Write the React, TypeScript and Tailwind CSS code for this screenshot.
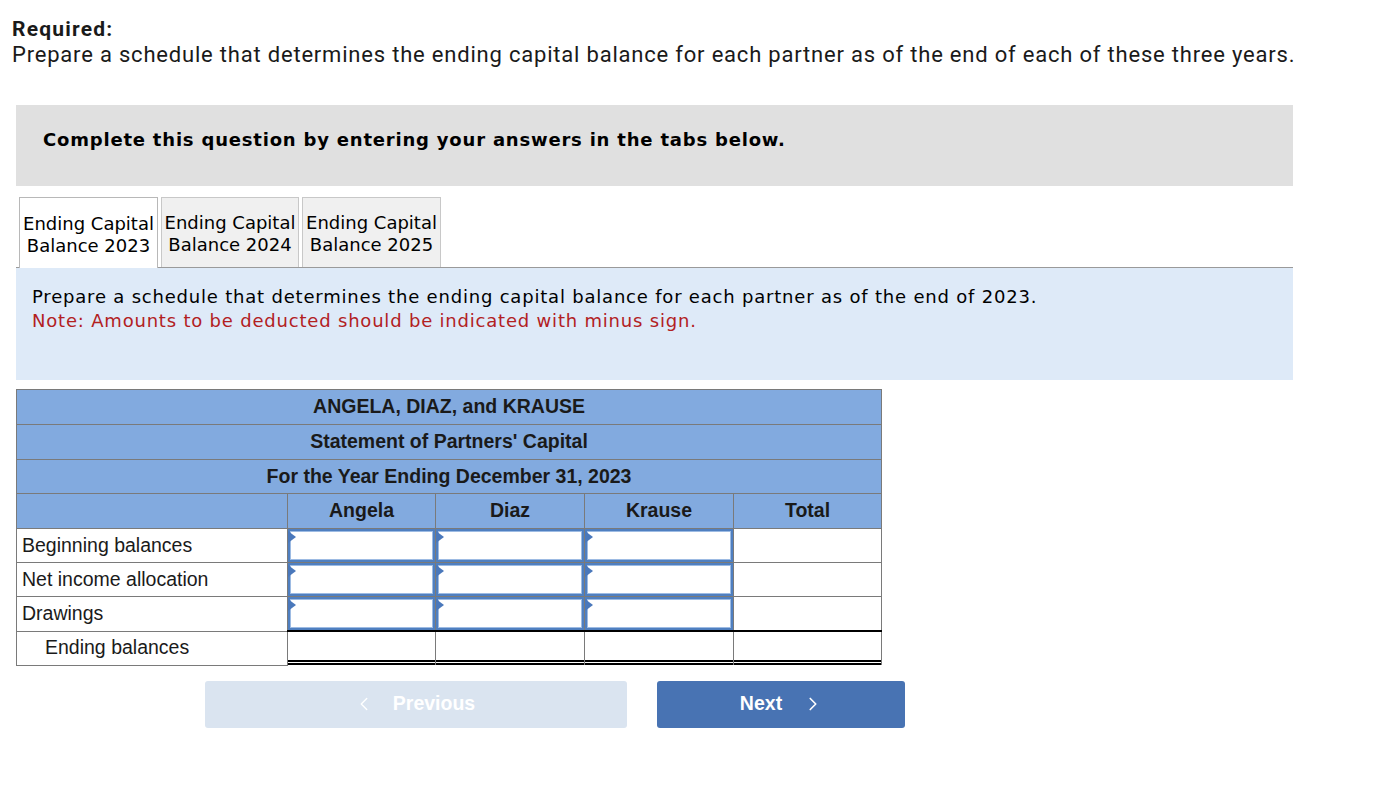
import { ChevronLeft, ChevronRight } from "lucide-react";

const ROWS = ["Beginning balances", "Net income allocation", "Drawings"];
const PARTNERS = ["Angela", "Diaz", "Krause"];
const TITLES = [
  { t: "ANGELA, DIAZ, and KRAUSE", h: "h-[35px]" },
  { t: "Statement of Partners' Capital", h: "h-[35px]" },
  { t: "For the Year Ending December 31, 2023", h: "h-[34px]" },
];

const InputCell = () => (
  <td className="border border-[#7a7a7a] p-0">
    <div className="relative h-[33px] border-2 border-[#4f7fc0] bg-white">
      <div className="absolute inset-0 border border-[#9dbbe3]" />
      <div className="absolute left-[-2px] top-[0px] w-0 h-0 border-y-[6px] border-y-transparent border-l-[8px] border-l-[#4a78bb]" />
    </div>
  </td>
);

export default function App() {
  return (
    <div className="w-[1384px] h-[804px] bg-white text-[#1a1a1a]">
      <div className="pt-[18px] pl-[12px] font-['Roboto',sans-serif]">
        <div className="text-[21px] font-bold tracking-[1.2px] leading-[23px]">Required:</div>
        <div className="text-[22px] tracking-[0.8px] leading-[28px]">
          Prepare a schedule that determines the ending capital balance for each partner as of the end of each of these three years.
        </div>
      </div>

      <div className="ml-[16px] w-[1277px]">
        <div className="mt-[36px] h-[81px] bg-[#e0e0e0] flex items-center pl-[27px] pb-[13px]">
          <span className="font-['DejaVu_Sans',sans-serif] font-bold text-[18px] tracking-[0.8px] text-black">
            Complete this question by entering your answers in the tabs below.
          </span>
        </div>

        <div className="mt-[11px] flex items-end gap-[3px] pl-[3px] border-b border-[#9a9a9a] font-['DejaVu_Sans',sans-serif] text-[18px] leading-[22px] text-black">
          <div className="w-[139px] h-[71px] bg-white border border-[#b8b8b8] border-b-0 -mb-px flex flex-col items-center justify-center pt-[3px]">
            <span>Ending Capital</span>
            <span>Balance 2023</span>
          </div>
          <div className="w-[138px] h-[70px] bg-[#f0f0f0] border border-[#c8c8c8] border-b-0 flex flex-col items-center justify-center pt-[3px]">
            <span>Ending Capital</span>
            <span>Balance 2024</span>
          </div>
          <div className="w-[139px] h-[70px] bg-[#f0f0f0] border border-[#c8c8c8] border-b-0 flex flex-col items-center justify-center pt-[3px]">
            <span>Ending Capital</span>
            <span>Balance 2025</span>
          </div>
        </div>

        <div className="h-[112px] bg-[#deeaf8] pl-[16px] pt-[17px] font-['DejaVu_Sans',sans-serif] text-[18px] tracking-[0.8px] leading-[24px]">
          <div className="text-black">
            Prepare a schedule that determines the ending capital balance for each partner as of the end of 2023.
          </div>
          <div className="text-[#b2211f]">Note: Amounts to be deducted should be indicated with minus sign.</div>
        </div>
      </div>

      <table className="ml-[16px] mt-[9px] border-collapse font-['Liberation_Sans',Arial,sans-serif] text-[19.5px] text-[#1a1a1a] table-fixed w-[865px]">
        <colgroup>
          <col className="w-[271px]" />
          <col className="w-[148px]" />
          <col className="w-[149px]" />
          <col className="w-[149px]" />
          <col className="w-[148px]" />
        </colgroup>
        <tbody>
          {TITLES.map(({ t, h }) => (
            <tr key={t}>
              <td colSpan={5} className={`${h} p-0 bg-[#82aadf] border border-[#7a7a7a] text-center font-bold`}>
                {t}
              </td>
            </tr>
          ))}
          <tr>
            <td className="h-[35px] bg-[#82aadf] border border-[#7a7a7a] border-r-0" />
            {[...PARTNERS, "Total"].map((p) => (
              <td key={p} className="h-[35px] p-0 bg-[#82aadf] border border-[#7a7a7a] text-center font-bold">
                {p}
              </td>
            ))}
          </tr>
          {ROWS.map((r) => (
            <tr key={r}>
              <td className="h-[34px] px-[5px] py-0 border border-[#7a7a7a] bg-white">{r}</td>
              {PARTNERS.map((p) => (
                <InputCell key={p} />
              ))}
              <td className="h-[34px] border border-[#7a7a7a] bg-white" />
            </tr>
          ))}
          <tr>
            <td className="h-[34px] pl-[28px] py-0 border border-[#7a7a7a] bg-white">Ending balances</td>
            {[0, 1, 2, 3].map((i) => (
              <td key={i} className="p-0 border-x border-x-[#7a7a7a] border-t-2 border-t-black bg-white align-bottom">
                <div className="h-[28px]" />
                <div className="h-[5px] border-y-2 border-black" />
              </td>
            ))}
          </tr>
        </tbody>
      </table>

      <div className="mt-[15px] flex gap-[30px] pl-[205px] font-['Liberation_Sans',Arial,sans-serif] font-bold text-[19.5px] text-white">
        <button className="w-[422px] h-[47px] rounded-[3px] bg-[#dae4f0] flex items-center justify-center gap-[18px] pr-[4px]">
          <ChevronLeft size={22} strokeWidth={1.5} />
          <span>Previous</span>
        </button>
        <button className="w-[248px] h-[47px] rounded-[3px] bg-[#4873b3] flex items-center justify-center gap-[20px] pl-[2px]">
          <span>Next</span>
          <ChevronRight size={22} strokeWidth={1.8} />
        </button>
      </div>
    </div>
  );
}
